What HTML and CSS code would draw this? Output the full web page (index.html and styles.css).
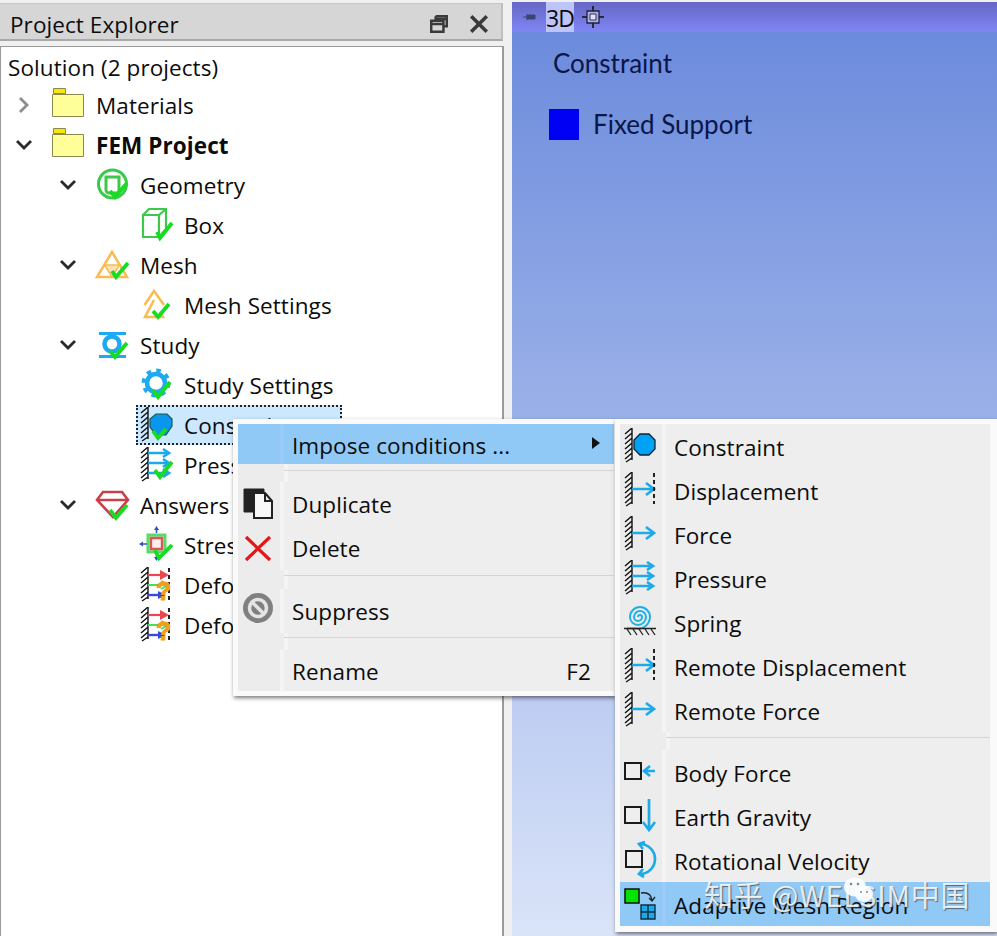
FILE: index.html
```html
<!DOCTYPE html>
<html lang="en">
<head>
<meta charset="utf-8">
<title>Project Explorer</title>
<link rel="stylesheet" href="styles.css">
</head>
<body>
<svg class="defs" aria-hidden="true">
  <symbol id="hatch" viewBox="0 0 36 36"><path class="ink hatch" d="M10 0V32M3 6 10 0M3 11 10 5M3 16 10 10M3 21 10 15M3 26 10 20M3 31 10 25M4 34 10 30"/></symbol>
  <symbol id="check" viewBox="0 0 36 36"><path class="chk" d="M16 24 21 30 33 16"/></symbol>
  <symbol id="arrow" viewBox="0 0 36 36"><path class="arr" d="M10 17H31M24 11 32 17 24 23"/></symbol>
  <symbol id="dash" viewBox="0 0 36 36"><path class="ink dashed" d="M32 1V32"/></symbol>
  <symbol id="three" viewBox="0 0 36 36"><path class="arr" d="M10 6H30M25 2 31 6 25 10M10 16H30M25 12 31 16 25 20M10 26H30M25 22 31 26 25 30"/></symbol>
  <symbol id="deform" viewBox="0 0 36 36">
    <use href="#hatch"/>
    <path class="ink dashed" d="M31 1V33"/>
    <path class="red" d="M10 8H24"/><path class="redf" d="M22 3 31 8 22 13z"/>
    <path class="grn" d="M10 18H29M23 14 30 18 23 22"/>
    <path class="blu" d="M10 28H22"/><path class="bluf" d="M20 24 28 28 20 32z"/>
    <text x="18" y="33" class="qm">?</text>
  </symbol>
</svg>

<div class="app">
  <section class="explorer">
    <header class="titlebar">
      <span class="title">Project Explorer</span>
      <svg class="tb-ico" viewBox="0 0 18 18"><path d="M6 2h10v9h-3M6 2v4M2 6h11v10H2zM2 9h11M6 4.500h10" class="win"/></svg>
      <svg class="tb-ico" viewBox="0 0 18 18"><path d="M2 2 16 16M16 2 2 16" class="close"/></svg>
    </header>
    <div class="tree">
      <div class="solution">Solution (2 projects)</div>

      <div class="row d1"><svg class="chev off" viewBox="0 0 20 20"><path d="M6 3 13 10 6 17"/></svg>
        <div class="node"><svg class="ico" viewBox="0 0 36 36"><path class="ftab" d="M3.500 1.500H15.500V6.500H3.500z"/><path class="fbody" d="M2.500 7.500H33.500V29.500H2.500z"/></svg><span class="lbl">Materials</span></div></div>

      <div class="row d1"><svg class="chev" viewBox="0 0 20 20"><path d="M3 6 10 13 17 6"/></svg>
        <div class="node"><svg class="ico" viewBox="0 0 36 36"><path class="ftab" d="M3.500 1.500H15.500V6.500H3.500z"/><path class="fbody" d="M2.500 7.500H33.500V29.500H2.500z"/></svg><span class="lbl bold">FEM Project</span></div></div>

      <div class="row d2"><svg class="chev" viewBox="0 0 20 20"><path d="M3 6 10 13 17 6"/></svg>
        <div class="node"><svg class="ico" viewBox="0 0 36 36"><circle class="gline" cx="18.500" cy="17" r="14"/><path class="gline" d="M12 10h13v13a3 3 0 0 1-3 3h-7a3 3 0 0 1-3-3z"/><use href="#check"/></svg><span class="lbl">Geometry</span></div></div>

      <div class="row d3"><div class="node"><svg class="ico" viewBox="0 0 36 36"><path class="gline thin" d="M5 8H21V30H5zM5 8 11 2H28V22L21 30M21 8 28 2"/><path class="chk" d="M19 25 22 31 34 16"/></svg><span class="lbl">Box</span></div></div>

      <div class="row d2"><svg class="chev" viewBox="0 0 20 20"><path d="M3 6 10 13 17 6"/></svg>
        <div class="node"><svg class="ico" viewBox="0 0 36 36"><path class="mesh" d="M18 5 33 30H3z"/><path class="mesh2" d="M10.500 18H25.500L18 30z"/><path class="chk" d="M18 24 22 30 34 16"/></svg><span class="lbl">Mesh</span></div></div>

      <div class="row d3"><div class="node"><svg class="ico" viewBox="0 0 36 36"><path class="mesh" d="M6.500 18 16 4 26 18M16 13 7 30H25L22 25"/><path class="chk" d="M15 24 20 30 31 17"/></svg><span class="lbl">Mesh Settings</span></div></div>

      <div class="row d2"><svg class="chev" viewBox="0 0 20 20"><path d="M3 6 10 13 17 6"/></svg>
        <div class="node"><svg class="ico" viewBox="0 0 36 36"><path class="bar" d="M5 6.500H32M5 29.500H32"/><circle class="ring" cx="18" cy="17" r="7.500"/><use href="#check"/></svg><span class="lbl">Study</span></div></div>

      <div class="row d3"><div class="node"><svg class="ico" viewBox="0 0 36 36"><circle class="teeth" cx="18" cy="16" r="12.500"/><circle class="ring" cx="18" cy="16" r="9"/><path class="chk" d="M15 23 20 30 32 15"/></svg><span class="lbl">Study Settings</span></div></div>

      <div class="row d3"><div class="node selected"><svg class="ico" viewBox="0 0 36 36"><use href="#hatch"/><path class="octa" d="M18 7H29L34 12V19L28 28H18L12 20V12z"/><path class="chk" d="M15 24 20 31 28 22"/></svg><span class="lbl">Constraint</span></div></div>

      <div class="row d3"><div class="node"><svg class="ico" viewBox="0 0 36 36"><use href="#hatch"/><use href="#three"/><path class="chk" d="M17 23 22 30 34 15"/></svg><span class="lbl">Pressure</span></div></div>

      <div class="row d2"><svg class="chev" viewBox="0 0 20 20"><path d="M3 6 10 13 17 6"/></svg>
        <div class="node"><svg class="ico" viewBox="0 0 36 36"><path class="gem" d="M9 5H28L34 13 19 30 3 13zM3 13H34"/><path class="chk" d="M16 23 22 31 33 18"/></svg><span class="lbl">Answers</span></div></div>

      <div class="row d3"><div class="node"><svg class="ico" viewBox="0 0 36 36"><path class="stress-g" d="M10 8H27V25H10z"/><path class="stress-r" d="M13 11H24V22H13z"/><path class="tiny" d="M18.500 2V6M5 17H9M18.500 27V31"/><path class="tinyf" d="M16 3 18.500 -1 21 3zM5 14.500 1 17 5 19.500zM16 30 18.500 34 21 30z"/><path class="chk" d="M17 23 21 31 34 18"/></svg><span class="lbl">Stress</span></div></div>

      <div class="row d3"><div class="node"><svg class="ico" viewBox="0 0 36 36"><use href="#deform"/></svg><span class="lbl">Deformation</span></div></div>
      <div class="row d3"><div class="node"><svg class="ico" viewBox="0 0 36 36"><use href="#deform"/></svg><span class="lbl">Deformation</span></div></div>
    </div>
  </section>

  <section class="viewport">
    <div class="vp-bar">
      <svg class="pin" viewBox="0 0 14 10"><path d="M1 5H6M5 2V8M5 3H13V7H5z"/></svg>
      <span class="tab3d">3D</span>
      <svg class="cross" viewBox="0 0 24 24"><path class="cross-a" d="M12 1V23M1 12H23"/><path class="cross-b" d="M6 6H18V18H6z"/><path class="cross-c" d="M9 9H15V15H9z"/></svg>
    </div>
    <div class="vp-canvas">
      <div class="legend-title">Constraint</div>
      <div class="legend-row"><span class="swatch"></span><span>Fixed Support</span></div>
    </div>
  </section>
</div>

<nav class="menu main-menu">
  <div class="mi hot h40"><span class="gut"></span><span class="mt low">Impose conditions ...</span><span class="tri"></span></div>
  <div class="sep s1"></div>
  <div class="mi"><span class="gut"><svg class="ico" viewBox="0 0 36 36"><path class="dup-b" d="M4 3H24V26H4z"/><path class="dup-f" d="M14 7H25L32 15V32H14z M25 7V15H32"/></svg></span><span class="mt">Duplicate</span></div>
  <div class="mi"><span class="gut"><svg class="ico" viewBox="0 0 36 36"><path class="x" d="M6 7 30 30M30 7 6 30"/></svg></span><span class="mt">Delete</span></div>
  <div class="sep s2"></div>
  <div class="mi"><span class="gut"><svg class="ico up" viewBox="0 0 36 36"><circle class="sup-o" cx="18" cy="18" r="15"/><circle class="sup-i" cx="18" cy="18" r="8.500"/><path class="sup-i" d="M12 12 24 24"/></svg></span><span class="mt">Suppress</span></div>
  <div class="sep s3"></div>
  <div class="mi h41"><span class="gut"></span><span class="mt low">Rename</span><span class="key low">F2</span></div>
</nav>

<nav class="menu sub-menu">
  <div class="mi"><span class="gut"><svg class="ico" viewBox="0 0 36 36"><use href="#hatch"/><path class="octa2" d="M18 6H27L33 12V21L27 27H18L12 21V12z"/></svg></span><span class="mt low">Constraint</span></div>
  <div class="mi"><span class="gut"><svg class="ico" viewBox="0 0 36 36"><use href="#hatch"/><use href="#arrow"/><use href="#dash"/></svg></span><span class="mt low">Displacement</span></div>
  <div class="mi"><span class="gut"><svg class="ico" viewBox="0 0 36 36"><use href="#hatch"/><use href="#arrow"/></svg></span><span class="mt low">Force</span></div>
  <div class="mi"><span class="gut"><svg class="ico" viewBox="0 0 36 36"><use href="#hatch"/><use href="#three"/></svg></span><span class="mt low">Pressure</span></div>
  <div class="mi"><span class="gut"><svg class="ico" viewBox="0 0 36 36"><path class="spiral" d="M16 13A2 2 0 0 1 20 13A4 4 0 0 1 12 13A6 6 0 0 1 24 13A8 8 0 0 1 8 13A10 10 0 0 1 28 13A12 12 0 0 1 14 24.500H5"/><path class="ink" d="M2 24.500H34M5 25 9 31M11 25 15 31M17 25 21 31M23 25 27 31M29 25 33 31"/></svg></span><span class="mt low">Spring</span></div>
  <div class="mi"><span class="gut"><svg class="ico" viewBox="0 0 36 36"><use href="#hatch"/><use href="#arrow"/><use href="#dash"/></svg></span><span class="mt low">Remote Displacement</span></div>
  <div class="mi"><span class="gut"><svg class="ico" viewBox="0 0 36 36"><use href="#hatch"/><use href="#arrow"/></svg></span><span class="mt low">Remote Force</span></div>
  <div class="sep s4"></div>
  <div class="mi"><span class="gut"><svg class="ico" viewBox="0 0 36 36"><path class="sq" d="M3 9H19V25H3z"/><path class="arr" d="M33 17H23M28 12 22 17 28 22"/></svg></span><span class="mt low">Body Force</span></div>
  <div class="mi"><span class="gut"><svg class="ico" viewBox="0 0 36 36"><path class="sq" d="M3 9H19V25H3z"/><path class="arr" d="M27 1V31M21 24 27 32 33 24"/></svg></span><span class="mt low">Earth Gravity</span></div>
  <div class="mi"><span class="gut"><svg class="ico" viewBox="0 0 36 36"><path class="sq" d="M4 9H20V25H4z"/><path class="arr" d="M18 2A15 15 0 0 1 18 32M23 0 17 2 21 7M22 35 17 32 21 27"/></svg></span><span class="mt low">Rotational Velocity</span></div>
  <div class="mi hot"><span class="gut"><svg class="ico" viewBox="0 0 36 36"><path class="gsq" d="M3 3H17V17H3z"/><path class="ink" d="M19 7C25 6 29 8 30 14M27 12 30 15 33 11"/><path class="grid" d="M19 19H33V33H19zM26 19V33M19 26H33"/></svg></span><span class="mt low">Adaptive Mesh Region</span></div>
</nav>

<div class="watermark">知乎 @WELSIM中国
  <svg class="wx" viewBox="0 0 30 26"><ellipse class="wx-a" cx="12" cy="10" rx="11" ry="9.500"/><ellipse class="wx-a" cx="21" cy="17" rx="9" ry="8"/><circle class="wx-e" cx="8" cy="7" r="1.300"/><circle class="wx-e" cx="15" cy="7" r="1.300"/><circle class="wx-e" cx="18" cy="15" r="1"/><circle class="wx-e" cx="24" cy="15" r="1"/></svg>
</div>
</body>
</html>
```

FILE: styles.css
```css
* { box-sizing: border-box; }
html, body { margin: 0; height: 100%; }
body {
  width: 997px; height: 936px; overflow: hidden; position: relative;
  background: #f0f0f0; color: #0c0c0c;
  font-family: "Open Sans", "Noto Sans", sans-serif; font-size: 22.500px; letter-spacing: .08px;
}
.defs { display: none; }
.app { display: flex; height: 936px; }

/* explorer */
.explorer { width: 504px; display: flex; flex-direction: column; margin-right: 8px; }
.titlebar {
  height: 38px; margin: 3px 1px 0 0; padding: 5px 12px 0 10px;
  display: flex; align-items: center; gap: 20px;
  background: #d6d6d6; border-top: 1px solid #c6c6c6; border-bottom: 2px solid #a8a8a8; border-right: 2px solid #c0c0c0;
}
.title { margin-right: auto; }
.tb-ico { width: 20px; height: 20px; }
.win { fill: none; stroke: #3a3a3a; stroke-width: 2.200; }
.close { fill: none; stroke: #3a3a3a; stroke-width: 3.200; }
.tree {
  flex: 1; margin-top: 5px; background: #fff;
  border: 1px solid #9a9a9a; border-right-width: 2px; border-bottom: 0;
}
.solution { height: 38px; padding-left: 7px; line-height: 41px; }
.row { display: flex; align-items: center; height: 40px; white-space: nowrap; }
.d1 { padding-left: 13px; }
.d2 { padding-left: 57px; }
.d3 { padding-left: 135px; }
.chev { width: 20px; height: 20px; margin-right: 14px; flex: none; }
.chev path { fill: none; stroke: #2a2a2a; stroke-width: 2.800; }
.chev.off path { stroke: #8c8c8c; }
.node { display: flex; align-items: center; gap: 10px; height: 40px; padding-left: 2px; }
.selected { width: 206px; background: #cce8ff; outline: 2px dotted #1c2430; outline-offset: -2px; }
.ico { width: 36px; height: 36px; flex: none; overflow: visible; }
.bold { font-weight: 700; }

/* icon paints */
.ink { fill: none; stroke: #222; stroke-width: 1.300; }
.hatch { stroke: #111; stroke-width: 1.400; }
.dashed { stroke-dasharray: 4 3; stroke-width: 2; }
.chk { fill: none; stroke: #18dc22; stroke-width: 3.800; }
.arr { fill: none; stroke: #1eaae8; stroke-width: 2.700; }
.ftab { fill: #f6e60a; stroke: #8a8a50; stroke-width: 1; }
.fbody { fill: #ffff99; stroke: #8a8a50; stroke-width: 1; }
.gline { fill: none; stroke: #3cc84a; stroke-width: 3; }
.gline.thin { stroke-width: 2.200; }
.mesh { fill: none; stroke: #f8bc50; stroke-width: 2.500; }
.mesh2 { fill: #fbe2b0; stroke: #f8bc50; stroke-width: 1.500; }
.bar { fill: none; stroke: #1eaaf0; stroke-width: 3; }
.ring { fill: none; stroke: #1eaaf0; stroke-width: 4.500; }
.teeth { fill: none; stroke: #1eaaf0; stroke-width: 4; stroke-dasharray: 4.500 5.300; }
.octa { fill: #0a96ee; stroke: #1a5a48; stroke-width: 1.200; }
.octa2 { fill: #00a2f8; stroke: #123; stroke-width: 1.300; }
.gem { fill: none; stroke: #c8404a; stroke-width: 2.600; }
.stress-g { fill: #c8f5c8; stroke: #58dc68; stroke-width: 3; }
.stress-r { fill: #fdf0ec; stroke: #d85858; stroke-width: 2.400; }
.tiny { fill: none; stroke: #3858c0; stroke-width: 1.600; }
.tinyf { fill: #3050c0; }
.red { fill: none; stroke: #e84850; stroke-width: 2.200; }
.redf { fill: #e84850; }
.grn { fill: none; stroke: #50dc60; stroke-width: 2; }
.blu { fill: none; stroke: #3848e0; stroke-width: 2.400; }
.bluf { fill: #3848e0; }
.qm { fill: #f0a018; stroke: #f0a018; stroke-width: .9; font: 700 25px "Liberation Sans", sans-serif; }
.dup-b { fill: #222; stroke: #222; }
.dup-f { fill: #f8f8f8; stroke: #222; stroke-width: 2; }
.x { fill: none; stroke: #e01a1a; stroke-width: 3.200; }
.sup-o { fill: #808080; }
.sup-i { fill: none; stroke: #e4e4e4; stroke-width: 3.600; }
.up { transform: translateY(-3px); }
.spiral { fill: none; stroke: #20b0e8; stroke-width: 2; }
.sq { fill: #eee; stroke: #1a1a1a; stroke-width: 2; }
.gsq { fill: #00e400; stroke: #111; stroke-width: 1.500; }
.grid { fill: #1ea8ea; stroke: #103040; stroke-width: 1.400; }

/* viewport */
.viewport { flex: 1; display: flex; flex-direction: column; margin-top: 2px; }
.vp-bar {
  height: 30px; display: flex; align-items: center; padding-left: 10px;
  background: linear-gradient(#6666c4, #7f86f4);
}
.pin { width: 14px; height: 10px; margin-right: 10px; }
.pin path { fill: #3c4470; stroke: #3c4470; stroke-width: 1; }
.tab3d { width: 28px; height: 30px; background: #bcc4fa; text-align: center; line-height: 32px; font-size: 23px; letter-spacing: -1px; }
.cross { width: 24px; height: 24px; margin-left: 7px; }
.cross-a { stroke: #111; stroke-width: 1.500; fill: none; }
.cross-b { fill: #aab0ee; stroke: #223; stroke-width: 1.300; }
.cross-c { fill: #dfe2fa; stroke: #334; stroke-width: 1; }
.vp-canvas {
  flex: 1; padding: 13px 0 0 37px; color: #0a1648;
  background: linear-gradient(#6c8bdc, #dae4f9);
  font-family: "Lato", sans-serif; font-size: 26px; letter-spacing: 0;
}
.legend-title { height: 36px; line-height: 36px; margin-left: 4px; }
.legend-row { display: flex; align-items: center; gap: 14px; margin-top: 27px; }
.swatch { width: 30px; height: 31px; background: #0000f4; }

/* menus */
.menu {
  position: absolute; padding: 5px 7px 5px 5px;
  background: #fafafa; box-shadow: 1px 2px 4px rgba(30,30,40,.6);
}
.main-menu { left: 233px; top: 419px; width: 382px; height: 277px; padding-right: 1px; }
.sub-menu { left: 615px; top: 419px; width: 382px; height: 513px; }
.mi { display: flex; align-items: center; height: 44px; background: #eee; position: relative; }
.h40 { height: 40px; }
.h41 { height: 41px; }
.gut {
  width: 46px; height: 100%; flex: none; display: flex; align-items: center; padding-left: 2px;
  background: #ececec; border-right: 4px solid #f4f4f4;
}
.mt { margin-left: 8px; }
.low { padding-top: 2px; }
.hot, .hot .gut { background: #90c8f6; }
.hot .gut { border-right-color: #98ccf7; }
.tri { position: absolute; right: 14px; top: 13px; border-left: 8px solid #111; border-top: 6px solid transparent; border-bottom: 6px solid transparent; }
.key { margin-left: auto; margin-right: 23px; }
.sep { background: #eee; position: relative; }
.sep::before { content: ""; position: absolute; left: 0; top: 0; bottom: 0; width: 46px; background: #ececec; border-right: 4px solid #f4f4f4; }
.sep::after { content: ""; position: absolute; left: 46px; right: 0; height: 1px; background: #d4d4d4; }
.s1 { height: 18px; }
.s1::after { top: 6px; }
.s2 { height: 19px; }
.s2::after { top: 5px; }
.s3 { height: 17px; }
.s3::after { top: 4px; }
.s4 { height: 18px; }
.s4::after { top: 5px; }

.watermark {
  position: absolute; left: 704px; top: 873px; white-space: nowrap;
  font-family: "Noto Sans CJK SC", "Noto Sans", sans-serif; font-size: 29px; letter-spacing: .8px;
  color: rgba(255,255,255,.85); text-shadow: 1px 1px 1px rgba(60,60,60,.7);
}
.wx { position: absolute; left: 139px; top: 4px; width: 30px; height: 26px; }
.wx-a { fill: #fff; fill-opacity: .9; }
.wx-e { fill: #888; }
```
